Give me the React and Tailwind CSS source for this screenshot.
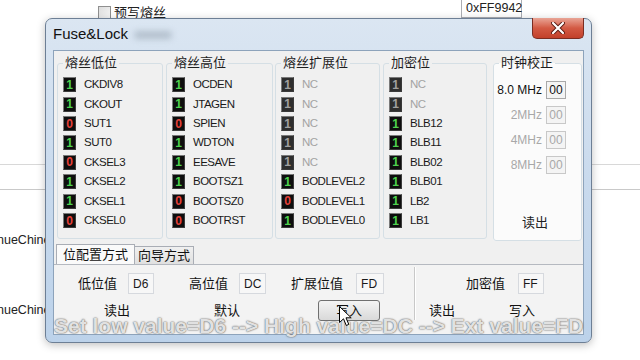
import React from 'react';

const low = [['1', 'CKDIV8'], ['1', 'CKOUT'], ['0', 'SUT1'], ['1', 'SUT0'], ['0', 'CKSEL3'], ['1', 'CKSEL2'], ['1', 'CKSEL1'], ['0', 'CKSEL0']];
const high = [['1', 'OCDEN'], ['1', 'JTAGEN'], ['0', 'SPIEN'], ['1', 'WDTON'], ['1', 'EESAVE'], ['1', 'BOOTSZ1'], ['0', 'BOOTSZ0'], ['0', 'BOOTRST']];
const ext = [['1', 'NC', true], ['1', 'NC', true], ['1', 'NC', true], ['1', 'NC', true], ['1', 'NC', true], ['1', 'BODLEVEL2'], ['0', 'BODLEVEL1'], ['1', 'BODLEVEL0']];
const lock = [['1', 'NC', true], ['1', 'NC', true], ['1', 'BLB12'], ['1', 'BLB11'], ['1', 'BLB02'], ['1', 'BLB01'], ['1', 'LB2'], ['1', 'LB1']];

const Led = ({ v, off }) => (
  <span
    className={`flex h-[15px] w-[13px] shrink-0 items-center justify-center border border-t-[#7a7a7a] border-l-[#7a7a7a] border-r-[#3a3a3a] border-b-[#3a3a3a] text-[12px] font-bold leading-none ${
      off ? 'bg-[#2e2e2e] text-[#a0a0a0]' : v === '1' ? 'bg-[#0e0e0e] text-[#4fd24f]' : 'bg-[#0e0e0e] text-[#e5413a]'
    }`}
  >
    {v}
  </span>
);

const FuseGroup = ({ title, rows, width }) => (
  <fieldset className={`${width} h-[184px] rounded-[3px] border border-[#d5dfe5] px-[5px] pt-[4px]`}>
    <legend className="px-[2px] text-[13px] leading-[16px] text-[#1e1e1e]">{title}</legend>
    {rows.map(([v, name, off], i) => (
      <div key={i} className="flex h-[19.43px] items-center gap-[8px]">
        <Led v={v} off={off} />
        <span className={`text-[11.5px] tracking-[-0.5px] ${off ? 'text-[#a3a3a3]' : 'text-[#1a1a1a]'}`}>{name}</span>
      </div>
    ))}
  </fieldset>
);

const ValBox = ({ children, w = 'w-[26px]' }) => (
  <span className={`flex h-[21px] ${w} items-center border border-[#d6d9de] bg-[#f7f7f7] pl-[4px] text-[12px] text-[#1a1a1a]`}>
    {children}
  </span>
);

const ClockRow = ({ label, dim }) => (
  <div className="flex items-center gap-[4px]">
    <span className={`text-[12px] ${dim ? 'text-[#a8a8a8]' : 'text-[#111]'}`}>{label}</span>
    <span
      className={`flex h-[18px] w-[20px] items-center justify-center border bg-[#f4f4f4] text-[12px] ${
        dim ? 'border-[#c8c8c8] text-[#a8a8a8]' : 'border-[#a9a9a9] text-[#111]'
      }`}
    >
      00
    </span>
  </div>
);

export default function App() {
  return (
    <div className="relative h-[360px] w-[640px] overflow-hidden bg-white font-['Liberation_Sans','Noto_Sans_CJK_SC',sans-serif] text-[#111]">
      {/* main program behind the dialog */}
      <div className="absolute left-[98px] top-[5px] flex items-center gap-[3px]">
        <span className="h-[13px] w-[13px] border border-[#8f8f8f] bg-gradient-to-br from-[#dcdcdc] to-[#f8f8f8]" />
        <span className="text-[13px] leading-[15px] text-[#222]">预写熔丝</span>
      </div>
      <div className="absolute left-[97px] top-[19px] h-px w-[70px] bg-[#8a8a8a]" />
      <div className="absolute left-[461px] top-[-1px] flex h-[19px] w-[61px] items-center border border-[#abadb3] bg-white pl-[4px] text-[12.5px] text-[#222]">
        0xFF9942
      </div>
      <div className="absolute left-0 top-[164px] h-px w-[640px] bg-[#d8d8d8]" />
      <div className="absolute left-0 top-[189px] h-px w-[640px] bg-[#c9c9c9]" />
      <div className="absolute left-[-3px] top-[231px] text-[12.5px] text-[#222]">nueChine</div>
      <div className="absolute left-[-3px] top-[301px] text-[12.5px] text-[#222]">nueChine</div>

      {/* Fuse&Lock dialog */}
      <div className="absolute left-[45px] top-[18px] z-10 flex h-[325px] w-[547px] flex-col rounded-[7px] border border-[#6d7f95] bg-gradient-to-b from-[#dbe6f2] via-[#c9daed] to-[#bcd2ea] px-[7px] pb-[7px] shadow-[0_2px_8px_rgba(0,0,0,0.25)]">
        <div className="relative flex h-[31px] shrink-0 items-center">
          <span className="text-[15px] text-[#111]">Fuse&amp;Lock</span>
          <span className="ml-[6px] h-[8px] w-[38px] rounded-full bg-[#9aa6b4]/60 blur-[3px]" />
          <div className="absolute right-[0px] top-[-1px] flex h-[21px] w-[52px] items-center justify-center rounded-b-[5px] border border-t-0 border-[#7a2d22] bg-gradient-to-b from-[#e8a496] via-[#d35a44] to-[#c2402a]">
            <svg width="14" height="12" viewBox="0 0 14 12">
              <path d="M2 1 L12 11 M12 1 L2 11" stroke="#5a1a12" strokeWidth="4" strokeLinecap="round" />
              <path d="M2 1 L12 11 M12 1 L2 11" stroke="#ffffff" strokeWidth="2.2" strokeLinecap="round" />
            </svg>
          </div>
        </div>

        <div className="flex flex-1 flex-col border border-[#8da3bb] bg-[#f0f0f0] pt-[4px]">
          {/* group boxes */}
          <div className="flex pl-[3px]">
            <FuseGroup title="熔丝低位" rows={low} width="w-[106px]" />
            <div className="w-[3px]" />
            <FuseGroup title="熔丝高位" rows={high} width="w-[107px]" />
            <div className="w-[2px]" />
            <FuseGroup title="熔丝扩展位" rows={ext} width="w-[105px]" />
            <div className="w-[3px]" />
            <FuseGroup title="加密位" rows={lock} width="w-[104px]" />
            <div className="w-[6px]" />
            <fieldset className="flex h-[186px] w-[89px] flex-col rounded-[3px] border border-[#d5dfe5] bg-[#fbfbfb] pr-[15px] pt-[4px]">
              <legend className="ml-[5px] px-[2px] text-[13px] leading-[16px] text-[#1e1e1e]">时钟校正</legend>
              <div className="flex flex-col items-end gap-[7px] pt-[6px]">
                <ClockRow label="8.0 MHz" />
                <ClockRow label="2MHz" dim />
                <ClockRow label="4MHz" dim />
                <ClockRow label="8MHz" dim />
              </div>
              <span className="mt-auto mb-[8px] pl-[28px] text-[13px] text-[#222]">读出</span>
            </fieldset>
          </div>

          {/* tabs */}
          <div className="mt-[3px] flex h-[20px] items-end pl-[2px]">
            <div className="flex h-[20px] items-center border border-b-0 border-[#a9adb5] bg-[#fafafa] px-[6px] text-[13px] text-[#111]">
              位配置方式
            </div>
            <div className="flex h-[18px] items-center border border-b-0 border-l-0 border-[#a9adb5] bg-gradient-to-b from-[#f0f0f0] to-[#e0e0e0] px-[3px] text-[13px] text-[#111]">
              向导方式
            </div>
          </div>
          <div className="flex flex-1 border-t border-[#b5b9c0] bg-[#f3f3f3]">
            <div className="flex w-[360px] flex-col pt-[8px]">
              <div className="flex h-[21px] items-center text-[13px]">
                <span className="ml-[24px]">低位值</span>
                <span className="ml-[11px]"><ValBox>D6</ValBox></span>
                <span className="ml-[35px]">高位值</span>
                <span className="ml-[11px]"><ValBox w="w-[27px]">DC</ValBox></span>
                <span className="ml-[25px]">扩展位值</span>
                <span className="ml-[13px]"><ValBox w="w-[28px]">FD</ValBox></span>
              </div>
              <div className="mt-[6px] flex h-[21px] items-center text-[13px]">
                <span className="ml-[50px]">读出</span>
                <span className="ml-[84px]">默认</span>
                <span className="ml-[78px] flex h-[21px] w-[62px] items-center justify-center rounded-[3px] border border-[#707070] bg-gradient-to-b from-[#f4f4f4] to-[#d9d9d9]">
                  写入
                </span>
              </div>
            </div>
            <div className="mt-[2px] mb-[14px] w-[2px] border-l border-r border-l-[#c8c8c8] border-r-white" />
            <div className="flex flex-1 flex-col pt-[8px]">
              <div className="flex h-[21px] items-center text-[13px]">
                <span className="ml-[50px]">加密值</span>
                <span className="ml-[13px]"><ValBox>FF</ValBox></span>
              </div>
              <div className="mt-[6px] flex h-[21px] items-center text-[13px]">
                <span className="ml-[13px]">读出</span>
                <span className="ml-[54px]">写入</span>
              </div>
            </div>
          </div>
        </div>
      </div>

      {/* subtitle overlay */}
      <div className="absolute left-[54px] top-[314px] z-20 whitespace-nowrap text-[21px] font-bold leading-[24px] text-[#f2f2f2]/90 [text-shadow:0_0_2px_#6a6a6a,0_0_1px_#6a6a6a]">
        Set low value=D6 --&gt; High value=DC --&gt; Ext value=FD
      </div>

      {/* mouse pointer */}
      <svg className="absolute left-[339px] top-[306px] z-30" width="14" height="21" viewBox="0 0 14 21">
        <path d="M0.5 0.5 L0.5 16.5 L4.5 12.8 L7.3 19.5 L9.8 18.4 L7 11.8 L12.2 11.8 Z" fill="#ffffff" stroke="#000000" strokeWidth="1" strokeLinejoin="round" />
      </svg>
    </div>
  );
}
